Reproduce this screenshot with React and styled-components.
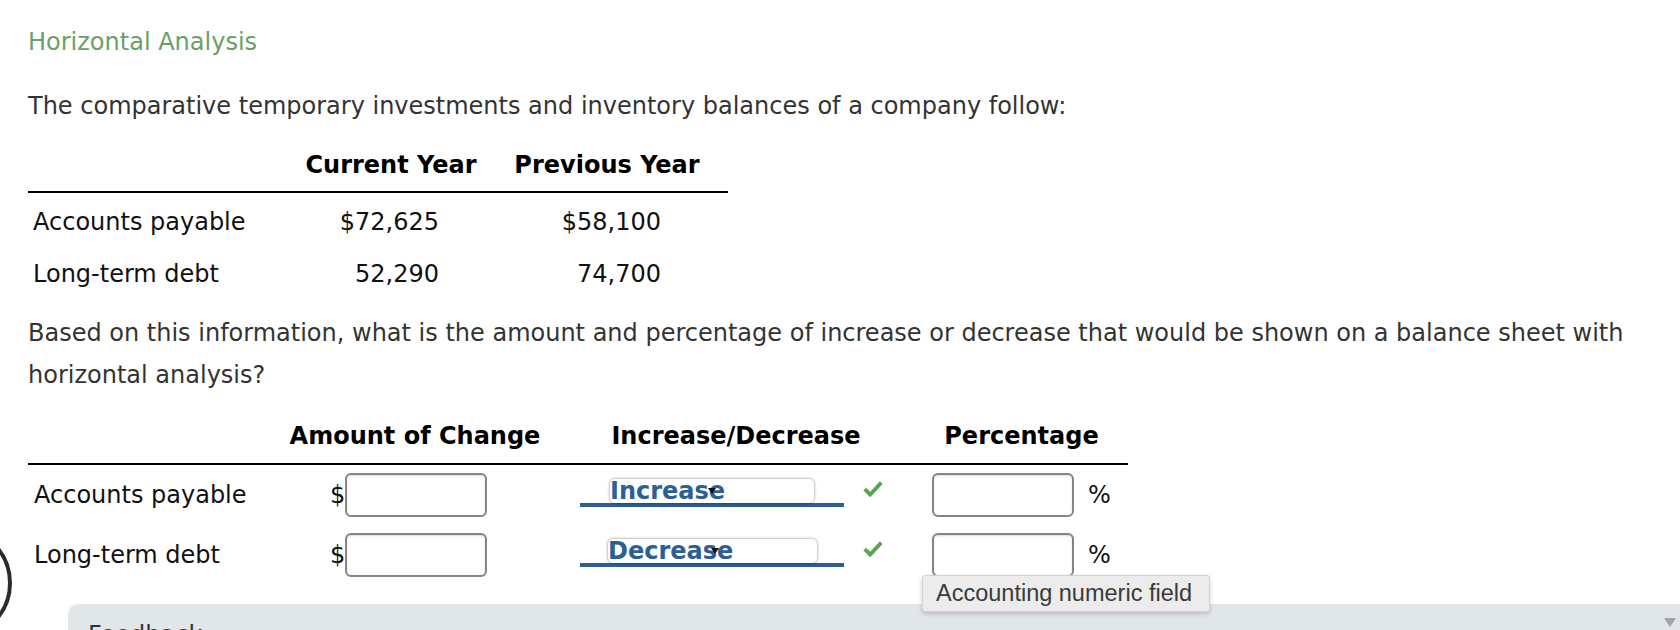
import React from 'react'
import styled, { createGlobalStyle } from "styled-components";

const Global = createGlobalStyle`
html, body {
  margin: 0;
  padding: 0;
  background: #fff;
  overflow: hidden;
}
body {
  font-family: "DejaVu Sans", Verdana, sans-serif;
  font-size: 24px;
}
`;

const Page = styled.div`
position: relative;
padding: 28px 0 0 28px;
`;

const Title = styled.h2`
margin: 0;
font-size: 24px;
font-weight: 400;
line-height: 28px;
color: #68a068;
`;

const Para = styled.p`
margin: ${({ $top }) => $top}px 0 0;
max-width: 1640px;
font-size: 24px;
line-height: 42px;
color: #333;
`;

const Table = styled.div`
display: grid;
grid-template-columns: ${({ $cols }) => $cols};
margin-top: ${({ $top }) => $top}px;
color: #111;
`;

const Head = styled.div`
font-weight: 700;
line-height: 28px;
text-align: center;
white-space: nowrap;
padding-bottom: ${({ $pb }) => $pb}px;
padding-left: ${({ $pl }) => $pl || 0}px;
padding-right: ${({ $pr }) => $pr || 0}px;
border-bottom: 2px solid #000;
color: #000;
`;

const Cell = styled.div`
line-height: 28px;
white-space: nowrap;
padding: 15px ${({ $pr }) => $pr || 0}px 9px ${({ $pl }) => $pl || 0}px;
text-align: ${({ $align }) => $align || "left"};
`;

const RowCell = styled.div`
position: relative;
display: flex;
align-items: center;
height: 60px;
line-height: 28px;
white-space: nowrap;
padding-left: ${({ $pl }) => $pl || 0}px;
`;

const Dollar = styled.span`
color: #111;
`;

const NumInput = styled.input`
box-sizing: border-box;
width: 142px;
height: 44px;
margin: 0;
border: 2px solid #858585;
border-radius: 6px;
box-shadow: inset 0 1px 2px rgba(0,0,0,0.15);
background: #fff;
font: inherit;
outline: none;
`;

const SelectWrap = styled.div`
display: flex;
flex-direction: column;
width: 264px;
margin-bottom: 4px;
`;

const SelectBox = styled.div`
position: relative;
width: ${({ $w }) => $w}px;
height: 24px;
margin-left: ${({ $indent }) => $indent}px;
background: #fff;
border-radius: 5px;
box-shadow: 0 0 3px rgba(0,0,0,0.5);
color: #2c5f96;
font-weight: 700;
line-height: 24px;
`;

const Arrow = styled.span`
position: absolute;
left: ${({ $x }) => $x}px;
top: 9px;
width: 0;
height: 0;
border-left: 4px solid transparent;
border-right: 4px solid transparent;
border-top: 6px solid #111;
`;

const Underline = styled.div`
height: 4px;
background: #2e5f93;
`;

const Check = styled.svg`
margin-left: 18px;
margin-bottom: 12px;
`;

const Percent = styled.span`
margin-left: 14px;
color: #111;
`;

const Tooltip = styled.div`
position: absolute;
left: 2px;
top: 50px;
box-sizing: border-box;
width: 288px;
height: 37px;
padding-left: 13px;
background: #ececec;
border: 1px solid #d2d2d2;
border-radius: 3px;
box-shadow: 0 2px 4px rgba(0,0,0,0.18);
font-family: "Liberation Sans", Arial, sans-serif;
font-size: 23.5px;
line-height: 35px;
color: #3a3a3a;
white-space: nowrap;
z-index: 2;
`;

const Feedback = styled.div`
position: relative;
margin: 19px 0 0 40px;
height: 140px;
padding: 17px 20px;
background: #e1e6e9;
border-top-left-radius: 10px;
color: #333;
line-height: 28px;
`;

const ScrollArrow = styled.span`
position: absolute;
right: 4px;
top: 14px;
width: 0;
height: 0;
border-left: 6px solid transparent;
border-right: 6px solid transparent;
border-top: 9px solid #a3a3a3;
`;

const Ring = styled.div`
position: absolute;
left: -102px;
top: 526px;
box-sizing: border-box;
width: 114px;
height: 114px;
border: 4px solid #2b2b2b;
border-radius: 50%;
`;

const CheckMark = () => (
  <Check width="22" height="19" viewBox="0 0 24 20">
    <path d="M1.5 11 L4.5 8 L9 12.5 L19.5 1 L22.5 4 L9 18.5 Z" fill="#58a550" />
  </Check>
);

const balances = [
  { label: "Accounts payable", cur: "$72,625", prev: "$58,100" },
  { label: "Long-term debt", cur: "52,290", prev: "74,700" },
];

const answers = [
  { label: "Accounts payable", choice: "Increase", indent: 30, w: 204, arrow: 98 },
  { label: "Long-term debt", choice: "Decrease", indent: 28, w: 209, arrow: 103, tip: true },
];

const App = () => {
  return (
    <Page>
      <Global />
      <Title>Horizontal Analysis</Title>
      <Para $top={29}>The comparative temporary investments and inventory balances of a company follow:</Para>

      <Table $cols="268px 190px 242px" $top={24}>
        <Head $pb={12} />
        <Head $pb={12}>Current Year</Head>
        <Head $pb={12}>Previous Year</Head>
        {balances.map((r) => (
          <React.Fragment key={r.label}>
            <Cell $pl={5}>{r.label}</Cell>
            <Cell $align="right" $pr={47}>{r.cur}</Cell>
            <Cell $align="right" $pr={67}>{r.prev}</Cell>
          </React.Fragment>
        ))}
      </Table>

      <Para $top={15}>
        Based on this information, what is the amount and percentage of increase or decrease that would be shown on a balance sheet with horizontal analysis?
      </Para>

      <Table $cols="250px 274px 368px 208px" $top={26}>
        <Head $pb={13} />
        <Head $pb={13}>Amount of Change</Head>
        <Head $pb={13}>Increase/Decrease</Head>
        <Head $pb={13} $pr={5}>Percentage</Head>
        {answers.map((r) => (
          <React.Fragment key={r.label}>
            <RowCell $pl={6}>{r.label}</RowCell>
            <RowCell $pl={52}>
              <Dollar>$</Dollar>
              <NumInput type="text" />
            </RowCell>
            <RowCell $pl={28}>
              <SelectWrap>
                <SelectBox $indent={r.indent} $w={r.w}>
                  {r.choice}
                  <Arrow $x={r.arrow} />
                </SelectBox>
                <Underline />
              </SelectWrap>
              <CheckMark />
            </RowCell>
            <RowCell $pl={12}>
              <NumInput type="text" />
              <Percent>%</Percent>
              {r.tip && <Tooltip>Accounting numeric field</Tooltip>}
            </RowCell>
          </React.Fragment>
        ))}
      </Table>

      <Feedback>
        Feedback
        <ScrollArrow />
      </Feedback>
      <Ring />
    </Page>
  )
}

export default App
